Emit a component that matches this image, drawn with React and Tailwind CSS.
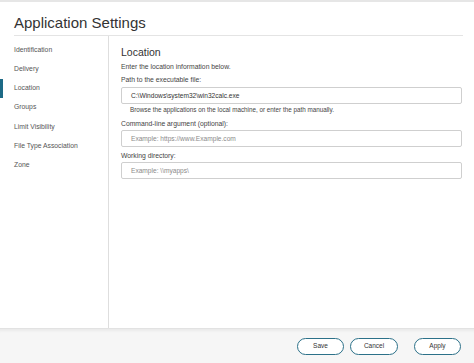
export default function App() {
  const navItems = [
    "Identification",
    "Delivery",
    "Location",
    "Groups",
    "Limit Visibility",
    "File Type Association",
    "Zone",
  ];
  const active = "Location";

  return (
    <div className="w-[474px] h-[363px] bg-white flex flex-col overflow-hidden font-['Liberation_Sans',Arial,sans-serif]">
      <div className="h-[2px] bg-[#e6e6e6]" />

      <div className="pl-[14px] pt-[11px] h-[33px]">
        <h1 className="text-[15px] leading-[20px] text-[#333]">Application Settings</h1>
      </div>
      <div className="ml-[14px] mr-[11px] h-[1px] bg-[#e4e4e4]" />

      <div className="flex flex-1 min-h-0">
        <nav className="w-[109px] border-r border-[#dedede] pt-[4px]">
          {navItems.map((item) => (
            <div
              key={item}
              className={`h-[19.3px] flex items-center text-[6.8px] text-[#555] ${
                item === active ? "border-l-[3px] border-[#1d6a86] pl-[11px]" : "pl-[14px]"
              }`}
            >
              {item}
            </div>
          ))}
        </nav>

        <main className="flex-1 pl-[12px] pr-[12px] pt-[8px] text-[6.8px] text-[#444]">
          <h2 className="text-[10.5px] leading-[17px] text-[#333]">Location</h2>
          <p className="leading-[12px]">Enter the location information below.</p>
          <p className="leading-[12px] mt-[1px]">Path to the executable file:</p>
          <FormInput value="C:\Windows\system32\win32calc.exe" className="mt-[1px]" />
          <p className="leading-[12px] pl-[9px] text-[6.3px]">
            Browse the applications on the local machine, or enter the path manually.
          </p>
          <p className="leading-[12px] mt-[1.5px]">Command-line argument (optional):</p>
          <FormInput placeholder="Example: https://www.Example.com" className="mt-[0.5px]" />
          <p className="leading-[12px] mt-[3px]">Working directory:</p>
          <FormInput placeholder="Example: \\myapps\" />
        </main>
      </div>

      <footer className="h-[35px] shrink-0 bg-[#f6f6f6] border-t border-[#e2e2e2] shadow-[inset_0_4px_3px_-2px_rgba(0,0,0,0.05)] flex items-center justify-end pr-[13px]">
        <FooterButton label="Save" />
        <FooterButton label="Cancel" className="ml-[6px]" width="w-[48px]" />
        <FooterButton label="Apply" className="ml-[16px]" />
      </footer>
    </div>
  );
}

function FormInput({ value, placeholder, className = "" }) {
  return (
    <div
      className={`h-[17px] border border-[#cfcfcf] rounded-[2px] bg-white flex items-center pl-[9px] text-[6.6px] ${
        value ? "text-[#333]" : "text-[#8a8a8a]"
      } ${className}`}
    >
      {value || placeholder}
    </div>
  );
}

function FooterButton({ label, className = "", width = "w-[47px]" }) {
  return (
    <button
      type="button"
      className={`h-[17px] shrink-0 rounded-full border-[1.5px] border-[#2c7189] bg-white text-[6.5px] text-[#333] ${width} ${className}`}
    >
      {label}
    </button>
  );
}
